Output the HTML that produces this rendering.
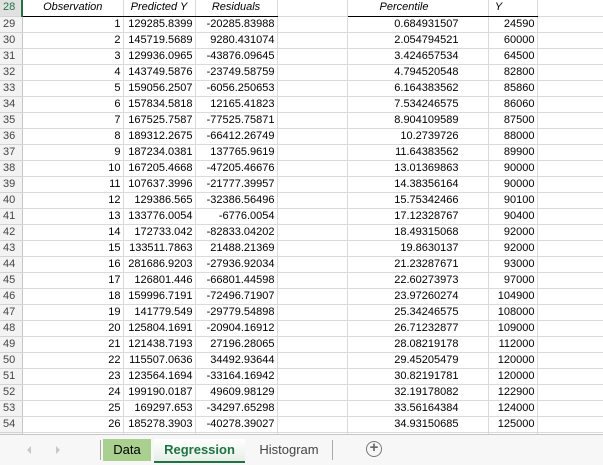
<!DOCTYPE html>
<html><head><meta charset="utf-8"><style>
*{margin:0;padding:0;box-sizing:border-box}
body{width:603px;height:465px;overflow:hidden;background:#fff;font-family:"Liberation Sans",sans-serif;font-size:11px;color:#000;position:relative}
table{border-collapse:collapse;table-layout:fixed;position:absolute;left:0;top:0;width:603px}
td{height:16px;border-right:1px solid #dadada;border-bottom:1px solid #dadada;text-align:right;padding:0 2px;white-space:nowrap;overflow:hidden;line-height:15px}
td.h{background:#f3f3f3;color:#444;text-align:left;padding-left:3px;border-right:1px solid #c6c6c6;border-bottom:1px solid #d4d4d4}
td.p{padding-right:29px}
tr.hd td{font-style:italic;text-align:center;border-bottom:1px solid #000}
tr.hd td.p{padding-right:29px}
tr.hd td.y{padding-right:0;padding-left:0;text-indent:-28px;overflow:visible}
tr.hd td.h{color:#217346;background:#e1e1e1;border-right:2px solid #217346;border-bottom:1px solid #d4d4d4;font-style:normal;text-align:left}
tr.hd td.n{border-bottom:1px solid #dadada}
#bar{position:absolute;left:0;top:434px;width:603px;height:31px;background:#f7f7f7;border-top:1px solid #c6c6c6}
.arr{position:absolute;top:11px;width:0;height:0;border-top:4px solid transparent;border-bottom:4px solid transparent}
.tab{position:absolute;top:4px;height:22px;font-size:13px;line-height:22px;text-align:center}
</style></head><body>
<table>
<colgroup><col style="width:22px"><col style="width:101px"><col style="width:72px"><col style="width:82px"><col style="width:70px"><col style="width:141px"><col style="width:49px"><col style="width:66px"></colgroup>
<tr class="hd"><td class="h">28</td><td>Observation</td><td>Predicted Y</td><td>Residuals</td><td class="n"></td><td class="p">Percentile</td><td class="y">Y</td><td class="n"></td></tr>
<tr><td class="h">29</td><td>1</td><td>129285.8399</td><td>-20285.83988</td><td></td><td class="p">0.684931507</td><td>24590</td><td></td></tr>
<tr><td class="h">30</td><td>2</td><td>145719.5689</td><td>9280.431074</td><td></td><td class="p">2.054794521</td><td>60000</td><td></td></tr>
<tr><td class="h">31</td><td>3</td><td>129936.0965</td><td>-43876.09645</td><td></td><td class="p">3.424657534</td><td>64500</td><td></td></tr>
<tr><td class="h">32</td><td>4</td><td>143749.5876</td><td>-23749.58759</td><td></td><td class="p">4.794520548</td><td>82800</td><td></td></tr>
<tr><td class="h">33</td><td>5</td><td>159056.2507</td><td>-6056.250653</td><td></td><td class="p">6.164383562</td><td>85860</td><td></td></tr>
<tr><td class="h">34</td><td>6</td><td>157834.5818</td><td>12165.41823</td><td></td><td class="p">7.534246575</td><td>86060</td><td></td></tr>
<tr><td class="h">35</td><td>7</td><td>167525.7587</td><td>-77525.75871</td><td></td><td class="p">8.904109589</td><td>87500</td><td></td></tr>
<tr><td class="h">36</td><td>8</td><td>189312.2675</td><td>-66412.26749</td><td></td><td class="p">10.2739726</td><td>88000</td><td></td></tr>
<tr><td class="h">37</td><td>9</td><td>187234.0381</td><td>137765.9619</td><td></td><td class="p">11.64383562</td><td>89900</td><td></td></tr>
<tr><td class="h">38</td><td>10</td><td>167205.4668</td><td>-47205.46676</td><td></td><td class="p">13.01369863</td><td>90000</td><td></td></tr>
<tr><td class="h">39</td><td>11</td><td>107637.3996</td><td>-21777.39957</td><td></td><td class="p">14.38356164</td><td>90000</td><td></td></tr>
<tr><td class="h">40</td><td>12</td><td>129386.565</td><td>-32386.56496</td><td></td><td class="p">15.75342466</td><td>90100</td><td></td></tr>
<tr><td class="h">41</td><td>13</td><td>133776.0054</td><td>-6776.0054</td><td></td><td class="p">17.12328767</td><td>90400</td><td></td></tr>
<tr><td class="h">42</td><td>14</td><td>172733.042</td><td>-82833.04202</td><td></td><td class="p">18.49315068</td><td>92000</td><td></td></tr>
<tr><td class="h">43</td><td>15</td><td>133511.7863</td><td>21488.21369</td><td></td><td class="p">19.8630137</td><td>92000</td><td></td></tr>
<tr><td class="h">44</td><td>16</td><td>281686.9203</td><td>-27936.92034</td><td></td><td class="p">21.23287671</td><td>93000</td><td></td></tr>
<tr><td class="h">45</td><td>17</td><td>126801.446</td><td>-66801.44598</td><td></td><td class="p">22.60273973</td><td>97000</td><td></td></tr>
<tr><td class="h">46</td><td>18</td><td>159996.7191</td><td>-72496.71907</td><td></td><td class="p">23.97260274</td><td>104900</td><td></td></tr>
<tr><td class="h">47</td><td>19</td><td>141779.549</td><td>-29779.54898</td><td></td><td class="p">25.34246575</td><td>108000</td><td></td></tr>
<tr><td class="h">48</td><td>20</td><td>125804.1691</td><td>-20904.16912</td><td></td><td class="p">26.71232877</td><td>109000</td><td></td></tr>
<tr><td class="h">49</td><td>21</td><td>121438.7193</td><td>27196.28065</td><td></td><td class="p">28.08219178</td><td>112000</td><td></td></tr>
<tr><td class="h">50</td><td>22</td><td>115507.0636</td><td>34492.93644</td><td></td><td class="p">29.45205479</td><td>120000</td><td></td></tr>
<tr><td class="h">51</td><td>23</td><td>123564.1694</td><td>-33164.16942</td><td></td><td class="p">30.82191781</td><td>120000</td><td></td></tr>
<tr><td class="h">52</td><td>24</td><td>199190.0187</td><td>49609.98129</td><td></td><td class="p">32.19178082</td><td>122900</td><td></td></tr>
<tr><td class="h">53</td><td>25</td><td>169297.653</td><td>-34297.65298</td><td></td><td class="p">33.56164384</td><td>124000</td><td></td></tr>
<tr><td class="h">54</td><td>26</td><td>185278.3903</td><td>-40278.39027</td><td></td><td class="p">34.93150685</td><td>125000</td><td></td></tr>
<tr><td class="h"></td><td></td><td></td><td></td><td></td><td></td><td></td><td></td></tr>
</table>
<div id="bar">
<div class="arr" style="left:27px;border-right:4px solid #c8c8c8"></div>
<div class="arr" style="left:56px;border-left:4px solid #c8c8c8"></div>
<div style="position:absolute;left:100px;top:5px;width:1px;height:20px;background:#aaa"></div>
<div class="tab" style="left:103px;width:48px;background:#a9d08e;color:#000">Data</div>
<div class="tab" style="left:154px;width:91px;background:linear-gradient(#fff,#e6efe6);color:#217346;font-weight:bold;border-bottom:2px solid #217346;height:24px">Regression</div>
<div class="tab" style="left:252px;width:74px;color:#444">Histogram</div>
<div style="position:absolute;left:332px;top:5px;width:1px;height:20px;background:#aaa"></div>
<div style="position:absolute;left:366px;top:6px;width:16px;height:16px;border:1.5px solid #777;border-radius:50%;color:#666;font-size:15px;line-height:12px;text-align:center;font-weight:bold">+</div>
</div>
</body></html>
